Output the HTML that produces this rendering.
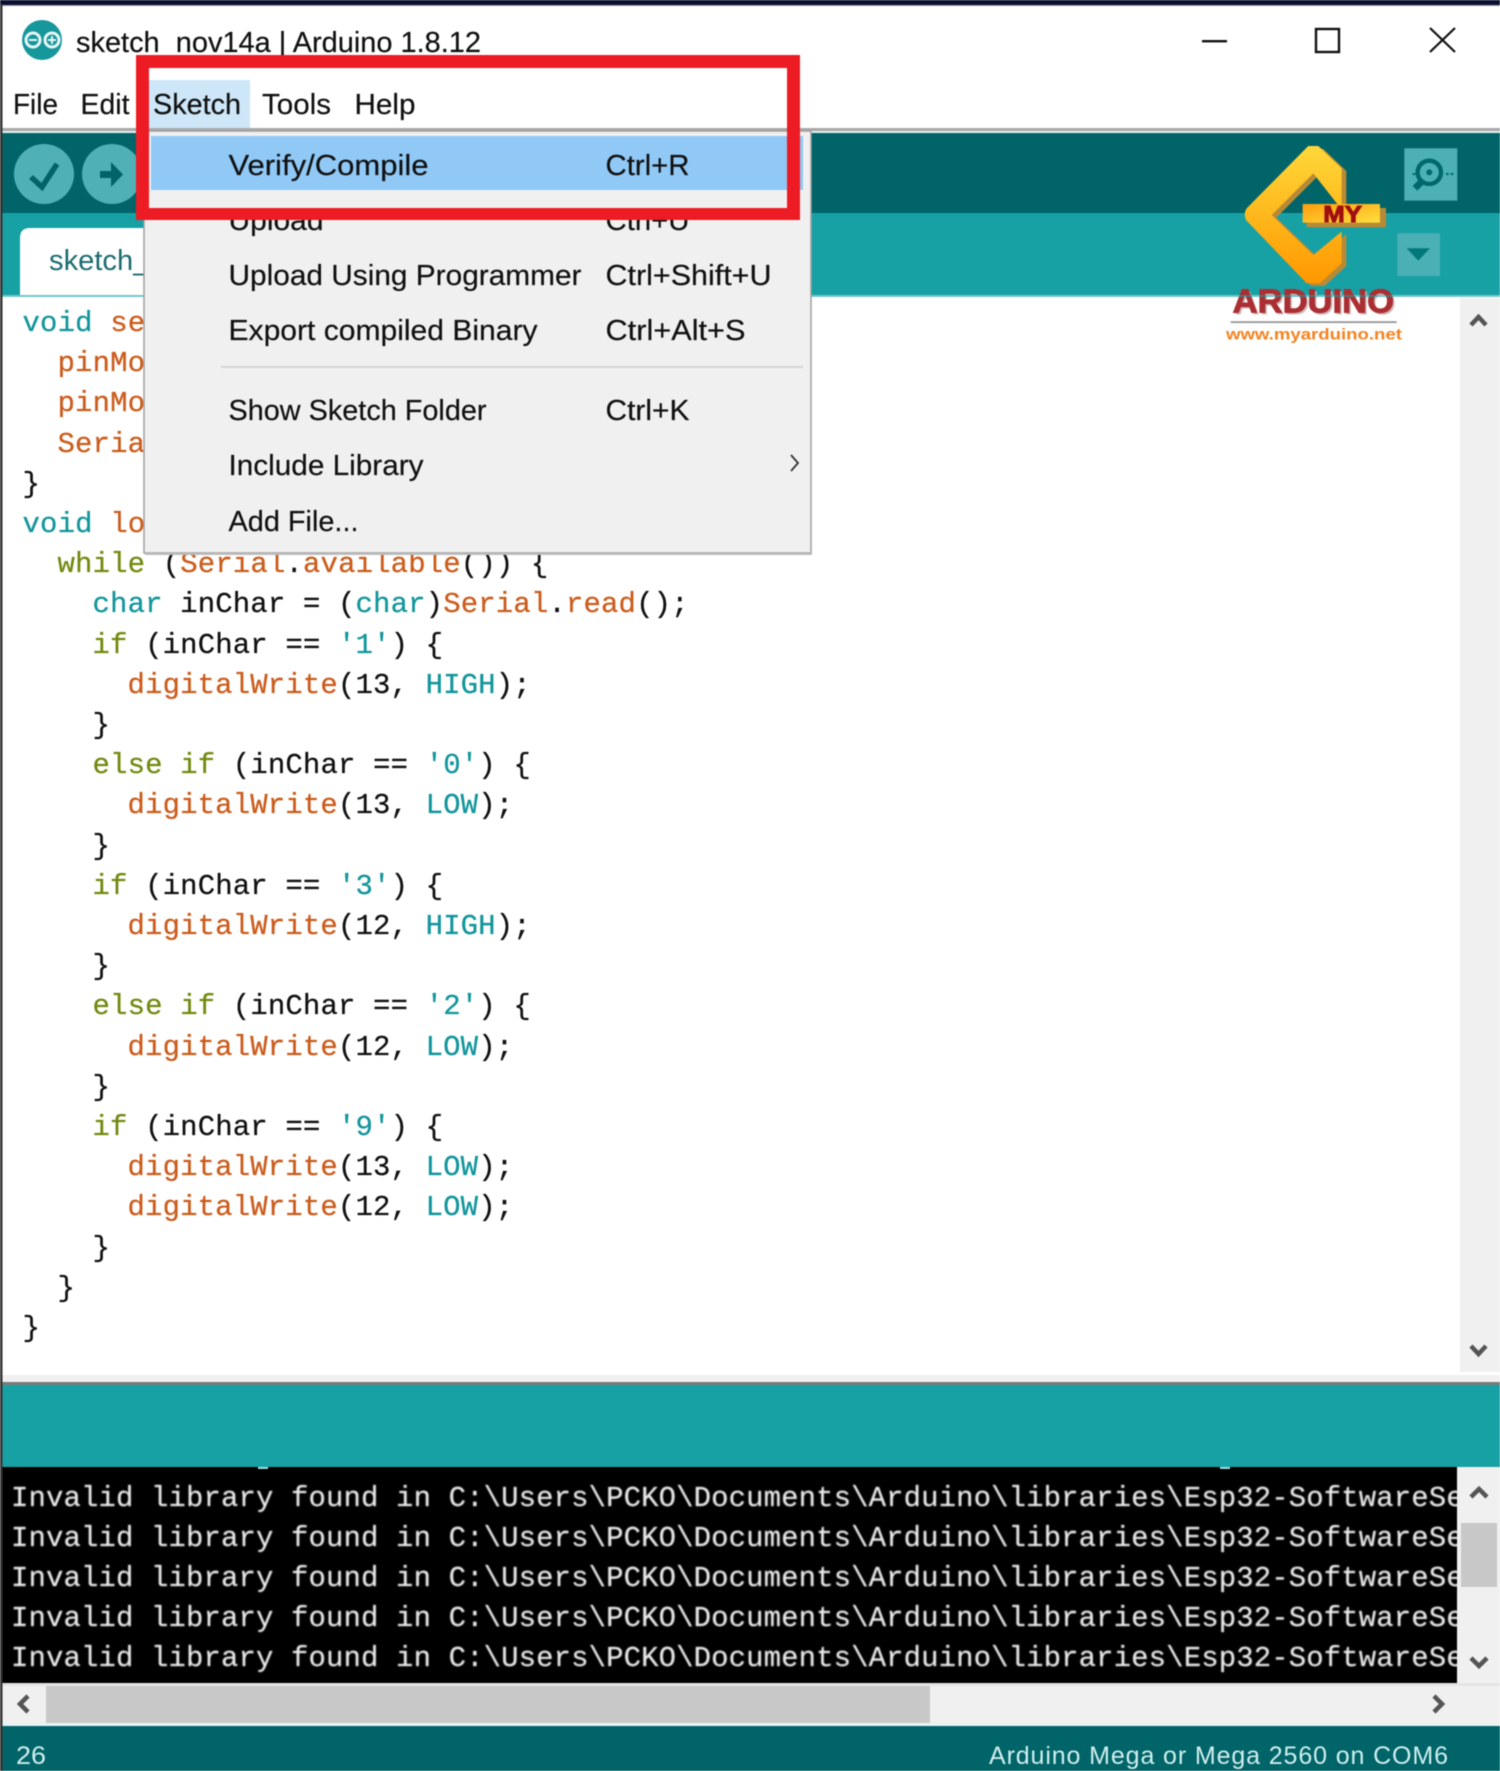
<!DOCTYPE html>
<html><head><meta charset="utf-8"><title>sketch_nov14a | Arduino 1.8.12</title>
<style>
html,body{margin:0;padding:0;background:#fff;width:1500px;height:1771px;overflow:hidden}
svg{display:block;filter:blur(.6px)}
text{white-space:pre}
.s{font-family:"Liberation Sans",sans-serif;font-size:29px;fill:#111;stroke:#111;stroke-width:.2px}
.c{font-family:"Liberation Mono",monospace;font-size:29px;fill:#111;stroke:#111;stroke-width:.25px;letter-spacing:.13px}
.t{fill:#12969c;stroke:#12969c}.o{fill:#cc5c1c;stroke:#cc5c1c}.g{fill:#728a10;stroke:#728a10}.q{fill:#12969c;stroke:#12969c}
.k{font-family:"Liberation Mono",monospace;font-size:29px;fill:#ececec;stroke:#ececec;stroke-width:.15px;letter-spacing:.1px}
.ch{fill:none;stroke:#555;stroke-width:4.5}
</style></head><body>
<svg xmlns="http://www.w3.org/2000/svg" width="1500" height="1771" viewBox="0 0 1500 1771">
<rect width="1500" height="1771" fill="#fff"/>
<rect x="0" y="0" width="1500" height="5" fill="#0b1030"/>
<rect x="0" y="5" width="1500" height="1" fill="#9a9ca8"/>

<circle cx="42" cy="40" r="20" fill="#16979c"/>
<g fill="none" stroke="#e6f5f5" stroke-width="3"><circle cx="33" cy="40" r="7"/><circle cx="52" cy="40" r="7"/></g>
<rect x="29" y="39" width="8" height="2" fill="#e6f5f5"/><rect x="48" y="39" width="8" height="2" fill="#e6f5f5"/><rect x="51" y="36" width="2" height="8" fill="#e6f5f5"/>
<text class="s" x="76" y="52" textLength="405" lengthAdjust="spacingAndGlyphs">sketch_nov14a | Arduino 1.8.12</text>

<rect x="1202" y="40" width="25" height="2.4" fill="#111"/>
<rect x="1316" y="29" width="23" height="23" fill="none" stroke="#111" stroke-width="2.4"/>
<path d="M1430 28L1455 52M1455 28L1430 52" stroke="#111" stroke-width="2.2" fill="none"/>

<rect x="149" y="80" width="101" height="48" fill="#cde6f8"/>
<text class="s" x="13" y="114" textLength="45" lengthAdjust="spacingAndGlyphs">File</text>
<text class="s" x="80.500" y="114" textLength="49" lengthAdjust="spacingAndGlyphs">Edit</text>
<text class="s" x="153" y="114" textLength="88" lengthAdjust="spacingAndGlyphs">Sketch</text>
<text class="s" x="262" y="114" textLength="69" lengthAdjust="spacingAndGlyphs">Tools</text>
<text class="s" x="354.500" y="114" textLength="61" lengthAdjust="spacingAndGlyphs">Help</text>

<rect x="0" y="128" width="1500" height="3" fill="#a9a9a9"/>
<rect x="0" y="131" width="1500" height="2" fill="#e6f2f2"/>
<rect x="0" y="133" width="1500" height="80" fill="#006468"/>
<rect x="0" y="213" width="1500" height="82" fill="#17A1A5"/>

<circle cx="44" cy="174" r="30" fill="#4fb1b5"/>
<path d="M31 177L42 187L57 164" fill="none" stroke="#006468" stroke-width="5.5"/>
<circle cx="112" cy="174" r="30" fill="#4fb1b5"/>
<path d="M100 171H111V162L123 174.500L111 187V178H100Z" fill="#006468"/>

<path d="M20 295V238Q20 228 30 228H180V295Z" fill="#fff"/>
<text x="49" y="270" font-family="Liberation Sans,sans-serif" font-size="29" fill="#1c6c70" textLength="196" lengthAdjust="spacingAndGlyphs">sketch_nov14a</text>

<!-- logo and right toolbar controls -->
<g transform="translate(1100 0) scale(.3333)">
<rect x="913" y="445" width="159" height="157" fill="#4cb0b4"/>
<circle cx="988" cy="517" r="35" fill="none" stroke="#00686c" stroke-width="13"/>
<circle cx="988" cy="517" r="9" fill="#00686c"/>
<path d="M965 545L945 565" stroke="#00686c" stroke-width="20"/>
<path d="M938 522h8M1038 522h8M1052 522h8" stroke="#00686c" stroke-width="6"/>
<rect x="892" y="700" width="128" height="128" fill="#4ab0b5"/>
<path d="M920 745H990L955 782Z" fill="#00787c"/>
<defs>
<linearGradient id="lg" x1="0" y1="0" x2="0" y2="1"><stop offset="0" stop-color="#ffd83a"/><stop offset="1" stop-color="#ff9800"/></linearGradient>
<linearGradient id="bg" x1="0" y1="0" x2="1" y2="1"><stop offset="0" stop-color="#ff9d0c"/><stop offset="1" stop-color="#ffe040"/></linearGradient>
</defs>
<path transform="translate(14 8)" d="M625 438H655L725 505V612H712L640 520L515 645L640 765L725 695V790L660 850H620L438 660Q430 640 440 625Z" fill="#b98a35"/>
<path d="M625 438H655L725 505V612H712L640 520L515 645L640 765L725 695V790L660 850H620L438 660Q430 640 440 625Z" fill="url(#lg)"/>
<rect x="620" y="624" width="238" height="58" fill="#b98a35"/>
<rect x="608" y="612" width="232" height="56" fill="url(#bg)"/>
<text x="670" y="666" font-family="Liberation Sans,sans-serif" font-weight="700" font-size="70" fill="#a00f0f" stroke="#a00f0f" stroke-width="3" textLength="116" lengthAdjust="spacingAndGlyphs">MY</text>
<text x="404" y="944" font-family="Liberation Sans,sans-serif" font-weight="700" font-size="100" fill="#cdbdbd" textLength="484" lengthAdjust="spacingAndGlyphs">ARDUINO</text>
<text x="398" y="937" font-family="Liberation Sans,sans-serif" font-weight="700" font-size="100" fill="#ab2f32" stroke="#ab2f32" stroke-width="3" textLength="484" lengthAdjust="spacingAndGlyphs">ARDUINO</text>
<rect x="392" y="964" width="498" height="5" fill="#8f8f94"/>
<text x="378" y="1018" font-family="Liberation Sans,sans-serif" font-weight="700" font-size="46" fill="#f58320" textLength="528" lengthAdjust="spacingAndGlyphs">www.myarduino.net</text>
</g>

<!-- editor -->
<rect x="0" y="295" width="1500" height="2" fill="#17A1A5" opacity=".6"/>
<g transform="translate(-.5 1)">
<text class="c" y="330"><tspan x="23" class="t">void</tspan> <tspan class="o">setup</tspan>() {</text>
<text class="c" x="58" y="370"><tspan class="o">pinMode</tspan>(13, OUTPUT);</text>
<text class="c" x="58" y="410"><tspan class="o">pinMode</tspan>(12, OUTPUT);</text>
<text class="c" x="58" y="451"><tspan class="o">Serial</tspan></text>
<text class="c" x="23" y="491">}</text>
<text class="c" y="531"><tspan x="23" class="t">void</tspan> <tspan class="o">loop</tspan>() {</text>
<text class="c" x="58" y="571"><tspan class="g">while</tspan> (<tspan class="o">Serial</tspan>.<tspan class="o">available</tspan>()) {</text>
<text class="c" x="93" y="611"><tspan class="t">char</tspan> inChar = (<tspan class="t">char</tspan>)<tspan class="o">Serial</tspan>.<tspan class="o">read</tspan>();</text>
<text class="c" x="93" y="652"><tspan class="g">if</tspan> (inChar == <tspan class="q">'1'</tspan>) {</text>
<text class="c" x="128" y="692"><tspan class="o">digitalWrite</tspan>(13, <tspan class="t">HIGH</tspan>);</text>
<text class="c" x="93" y="732">}</text>
<text class="c" x="93" y="772"><tspan class="g">else</tspan> <tspan class="g">if</tspan> (inChar == <tspan class="q">'0'</tspan>) {</text>
<text class="c" x="128" y="812"><tspan class="o">digitalWrite</tspan>(13, <tspan class="t">LOW</tspan>);</text>
<text class="c" x="93" y="853">}</text>
<text class="c" x="93" y="893"><tspan class="g">if</tspan> (inChar == <tspan class="q">'3'</tspan>) {</text>
<text class="c" x="128" y="933"><tspan class="o">digitalWrite</tspan>(12, <tspan class="t">HIGH</tspan>);</text>
<text class="c" x="93" y="973">}</text>
<text class="c" x="93" y="1013"><tspan class="g">else</tspan> <tspan class="g">if</tspan> (inChar == <tspan class="q">'2'</tspan>) {</text>
<text class="c" x="128" y="1054"><tspan class="o">digitalWrite</tspan>(12, <tspan class="t">LOW</tspan>);</text>
<text class="c" x="93" y="1094">}</text>
<text class="c" x="93" y="1134"><tspan class="g">if</tspan> (inChar == <tspan class="q">'9'</tspan>) {</text>
<text class="c" x="128" y="1174"><tspan class="o">digitalWrite</tspan>(13, <tspan class="t">LOW</tspan>);</text>
<text class="c" x="128" y="1214"><tspan class="o">digitalWrite</tspan>(12, <tspan class="t">LOW</tspan>);</text>
<text class="c" x="93" y="1255">}</text>
<text class="c" x="58" y="1295">}</text>
<text class="c" x="23" y="1335">}</text>
</g>

<rect x="1460" y="298" width="40" height="1074" fill="#f0f0f0"/>
<path class="ch" d="M1471 325L1478.500 317L1486 325"/>
<path class="ch" d="M1471 1346L1478.500 1354L1486 1346"/>
<rect x="0" y="1375" width="1500" height="7" fill="#f0f0f0"/>
<rect x="0" y="1382" width="1500" height="3" fill="#7a7a7a"/>

<!-- status/message area -->
<rect x="0" y="1385" width="1500" height="82" fill="#17A1A5"/>
<rect x="0" y="1467" width="1457" height="216" fill="#000"/>
<rect x="258" y="1467" width="10" height="2" fill="#9fdcdc"/>
<rect x="1220" y="1467" width="10" height="2" fill="#9fdcdc"/>
<svg x="0" y="1467" width="1457" height="216" viewBox="0 1467 1457 216">
<text class="k" x="11" y="1506">Invalid library found in C:\Users\PCKO\Documents\Arduino\libraries\Esp32-SoftwareSerial</text>
<text class="k" x="11" y="1546">Invalid library found in C:\Users\PCKO\Documents\Arduino\libraries\Esp32-SoftwareSerial</text>
<text class="k" x="11" y="1586">Invalid library found in C:\Users\PCKO\Documents\Arduino\libraries\Esp32-SoftwareSerial</text>
<text class="k" x="11" y="1626">Invalid library found in C:\Users\PCKO\Documents\Arduino\libraries\Esp32-SoftwareSerial</text>
<text class="k" x="11" y="1666">Invalid library found in C:\Users\PCKO\Documents\Arduino\libraries\Esp32-SoftwareSerial</text>
</svg>
<rect x="1457" y="1467" width="43" height="216" fill="#f0f0f0"/>
<rect x="1461" y="1523" width="36" height="64" fill="#c8c8c8"/>
<path class="ch" d="M1471 1497L1479 1489L1487 1497"/>
<path class="ch" d="M1471 1658L1479 1666L1487 1658"/>
<rect x="0" y="1683" width="1500" height="3" fill="#e4e4e4"/>
<rect x="0" y="1686" width="1500" height="37" fill="#f0f0f0"/>
<rect x="46" y="1686" width="884" height="37" fill="#c8c8c8"/>
<path class="ch" d="M28 1696L20 1704L28 1712"/>
<path class="ch" d="M1434 1696L1442 1704L1434 1712"/>
<rect x="0" y="1723" width="1500" height="3" fill="#e8f4f4"/>
<rect x="0" y="1726" width="1500" height="45" fill="#006468"/>
<text x="16" y="1764" font-family="Liberation Sans,sans-serif" font-size="25" fill="#cfeeee" textLength="30" lengthAdjust="spacingAndGlyphs">26</text>
<text x="989" y="1764" font-family="Liberation Sans,sans-serif" font-size="25" fill="#cfeeee" textLength="459" lengthAdjust="spacing">Arduino Mega or Mega 2560 on COM6</text>

<!-- menu -->
<rect x="144" y="131" width="667" height="422" fill="#f0f0f0" stroke="#a0a0a0" stroke-width="1.500"/>
<rect x="145" y="553" width="667" height="2" fill="#bcbcbc"/>
<rect x="151" y="136" width="652" height="54" fill="#90C8F6"/>
<text class="s" x="228.500" y="175" textLength="200" lengthAdjust="spacingAndGlyphs">Verify/Compile</text>
<text class="s" x="605.500" y="175" textLength="84" lengthAdjust="spacingAndGlyphs">Ctrl+R</text>
<text class="s" x="228.500" y="230" textLength="95" lengthAdjust="spacingAndGlyphs">Upload</text>
<text class="s" x="605.500" y="230" textLength="84" lengthAdjust="spacingAndGlyphs">Ctrl+U</text>
<text class="s" x="228.500" y="285" textLength="353" lengthAdjust="spacingAndGlyphs">Upload Using Programmer</text>
<text class="s" x="605.500" y="285" textLength="166" lengthAdjust="spacingAndGlyphs">Ctrl+Shift+U</text>
<text class="s" x="228.500" y="340" textLength="309" lengthAdjust="spacingAndGlyphs">Export compiled Binary</text>
<text class="s" x="605.500" y="340" textLength="140" lengthAdjust="spacingAndGlyphs">Ctrl+Alt+S</text>
<rect x="221" y="366" width="582" height="2" fill="#d4d4d4"/>
<text class="s" x="228.500" y="420" textLength="258" lengthAdjust="spacingAndGlyphs">Show Sketch Folder</text>
<text class="s" x="605.500" y="420" textLength="84" lengthAdjust="spacingAndGlyphs">Ctrl+K</text>
<text class="s" x="228.500" y="475" textLength="195" lengthAdjust="spacingAndGlyphs">Include Library</text>
<text class="s" x="228.500" y="531" textLength="130" lengthAdjust="spacingAndGlyphs">Add File...</text>
<path d="M791 455L798 463L791 471" fill="none" stroke="#333" stroke-width="1.800"/>

<!-- red highlight -->
<path fill-rule="evenodd" d="M136 55H800V220H136ZM149 68V208H787V68Z" fill="#ED1C24"/>

<rect x="0" y="4" width="2.500" height="1767" fill="#333"/>
</svg>
</body></html>
